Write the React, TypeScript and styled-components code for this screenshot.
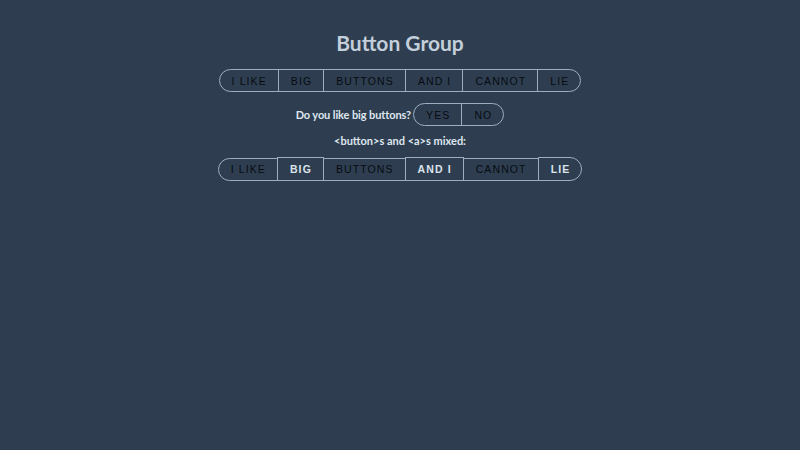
import styled, { createGlobalStyle, css } from 'styled-components';

const GlobalStyle = createGlobalStyle`
  html, body {
    margin: 0;
    padding: 0;
    background: #2e3e50;
  }
  body {
    font-family: Lato, "Open Sans", sans-serif;
  }
`;

const Page = styled.main`
  min-height: 450px;
  display: flex;
  flex-direction: column;
  align-items: center;
  padding-top: 30px;
  box-sizing: border-box;
`;

const Title = styled.h1`
  margin: 0 0 13px;
  font-size: 21px;
  font-weight: 700;
  color: #c3cfdb;
  line-height: 26px;
`;

const Group = styled.div`
  display: inline-flex;
  align-items: center;
`;

const Row = styled.div`
  display: flex;
  align-items: center;
  margin-top: 11px;
`;

const Label = styled.span`
  font-size: 11px;
  font-weight: 700;
  letter-spacing: -0.1px;
  color: #dfe6ee;
  margin-right: 2px;
`;

const Caption = styled.p`
  margin: 8px 0 9px;
  font-size: 11px;
  font-weight: 700;
  color: #dfe6ee;
  line-height: 14px;
`;

const pieceBase = css<{ $first?: boolean; $last?: boolean }>`
  box-sizing: border-box;
  height: 23px;
  padding: 0 11px 0 12px;
  display: flex;
  align-items: center;
  justify-content: center;
  font-family: "Liberation Sans", Arial, sans-serif;
  font-size: 10.5px;
  letter-spacing: 1.1px;
  border: 1px solid #9cafc0;
  background: transparent;
  margin-left: -1px;
  border-radius: ${(p) =>
    p.$first ? '12px 0 0 12px' : p.$last ? '0 12px 12px 0' : '0'};
  ${(p) => p.$first && 'margin-left: 0;'}
`;

const Btn = styled.button<{ $first?: boolean; $last?: boolean }>`
  ${pieceBase}
  color: #070b10;
  cursor: pointer;
`;

const LinkBtn = styled.a<{ $first?: boolean; $last?: boolean }>`
  ${pieceBase}
  height: 24px;
  color: #dbe3eb;
  font-weight: 700;
  text-decoration: none;
`;

type Piece = { label: string; link?: boolean };

const lyrics: Piece[] = [
  { label: 'I LIKE' },
  { label: 'BIG', link: true },
  { label: 'BUTTONS' },
  { label: 'AND I', link: true },
  { label: 'CANNOT' },
  { label: 'LIE', link: true },
];

export default function App() {
  return (
    <>
      <GlobalStyle />
      <Page>
        <Title>Button Group</Title>

        <Group>
          {lyrics.map((p, i) => (
            <Btn key={p.label} $first={i === 0} $last={i === lyrics.length - 1}>
              {p.label}
            </Btn>
          ))}
        </Group>

        <Row>
          <Label>Do you like big buttons?</Label>
          <Group>
            <Btn $first>YES</Btn>
            <Btn $last>NO</Btn>
          </Group>
        </Row>

        <Caption>&lt;button&gt;s and &lt;a&gt;s mixed:</Caption>

        <Group>
          {lyrics.map((p, i) => {
            const first = i === 0;
            const last = i === lyrics.length - 1;
            return p.link ? (
              <LinkBtn key={p.label} href="#" $first={first} $last={last}>
                {p.label}
              </LinkBtn>
            ) : (
              <Btn key={p.label} $first={first} $last={last}>
                {p.label}
              </Btn>
            );
          })}
        </Group>
      </Page>
    </>
  );
}
